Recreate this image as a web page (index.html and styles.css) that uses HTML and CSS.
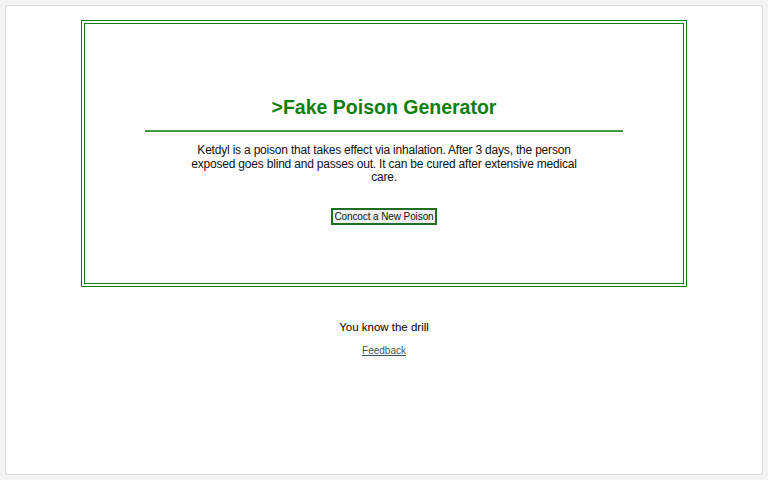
FILE: index.html
```html
<!DOCTYPE html>
<html lang="en">

<head>
    <meta charset="UTF-8">
    <meta name="viewport" content="width=device-width, initial-scale=1.0">
    <title>Fake Poison Generator</title>
    <link rel="stylesheet" href="styles.css">
</head>

<body>
    <div class="page">
        <div class="generator">
            <h1>&gt;Fake Poison Generator</h1>
            <hr class="rule">
            <p class="poison">Ketdyl is a poison that takes effect via inhalation. After 3 days, the person
                exposed goes blind and passes out. It can be cured after extensive medical care.</p>
            <button class="concoct">Concoct a New Poison</button>
        </div>

        <p class="drill">You know the drill</p>
        <p class="feedback"><a href="#">Feedback</a></p>
    </div>
</body>

</html>
```

FILE: styles.css
```css
body {
    font-family: "Liberation Sans", Arial, sans-serif;
    background-color: #f3f3f3;
    margin: 5px;
}

.page {
    background-color: #fff;
    border: 1px solid #dedede;
    height: 470px;
    padding-top: 14px;
    box-sizing: border-box;
}

.generator {
    width: 606px;
    height: 267px;
    box-sizing: border-box;
    margin: 0 auto;
    border: 4px double #128012;
    padding-top: 71px;
    text-align: center;
}

h1 {
    color: #0d7f0d;
    font-size: 19.5px;
    margin: 0;
    line-height: 24px;
}

.rule {
    width: 478px;
    border: none;
    border-top: 2px solid #3c9c3c;
    margin: 11px auto 12px;
}

.poison {
    max-width: 394px;
    margin: 0 auto;
    font-size: 12px;
    letter-spacing: -0.2px;
    line-height: 13.5px;
    color: #111;
}

.concoct {
    margin-top: 23px;
    font-family: "Liberation Sans", Arial, sans-serif;
    font-size: 10px;
    padding: 1px 1px;
    letter-spacing: -0.1px;
    background-color: #f2f2f2;
    border: 2px solid #1f6f1f;
    border-radius: 0;
    color: #111;
}

.drill {
    text-align: center;
    font-size: 11.5px;
    margin: 34px 0 0;
}

.feedback {
    text-align: center;
    font-size: 10px;
    margin: 12px 0 0;
}

.feedback a {
    color: #3b5566;
}
```
